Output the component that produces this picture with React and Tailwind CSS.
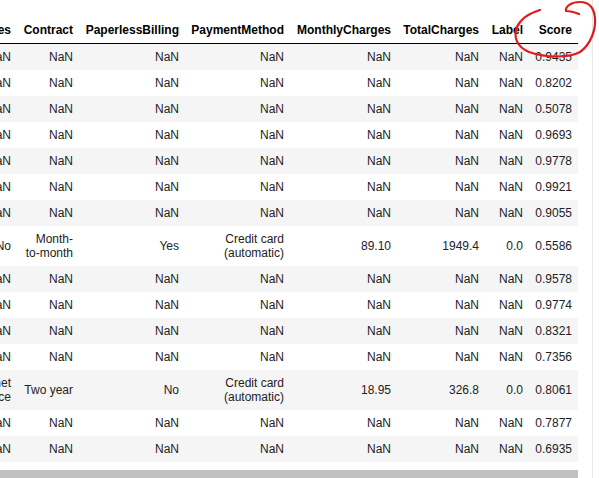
import React from 'react';

const columns = [
    { name: 'StreamingMovies', w: 'w-[112px]' },
    { name: 'Contract', w: 'w-[62px]' },
    { name: 'PaperlessBilling', w: 'w-[106px]' },
    { name: 'PaymentMethod', w: 'w-[105px]' },
    { name: 'MonthlyCharges', w: 'w-[107px]' },
    { name: 'TotalCharges', w: 'w-[88px]' },
    { name: 'Label', w: 'w-[44px]' },
    { name: 'Score', w: 'w-[49px]' },
];

const nanRow = (score) => ['NaN', 'NaN', 'NaN', 'NaN', 'NaN', 'NaN', 'NaN', score];

const rows = [
    nanRow('0.9435'),
    nanRow('0.8202'),
    nanRow('0.5078'),
    nanRow('0.9693'),
    nanRow('0.9778'),
    nanRow('0.9921'),
    nanRow('0.9055'),
    ['No', ['Month-', 'to-month'], 'Yes', ['Credit card', '(automatic)'], '89.10', '1949.4', '0.0', '0.5586'],
    nanRow('0.9578'),
    nanRow('0.9774'),
    nanRow('0.8321'),
    nanRow('0.7356'),
    [['No internet', 'service'], 'Two year', 'No', ['Credit card', '(automatic)'], '18.95', '326.8', '0.0', '0.8061'],
    nanRow('0.7877'),
    nanRow('0.6935'),
];

const Cell = ({ value }) => {
    if (Array.isArray(value)) {
        return (
            <>
                {value[0]}
                <br />
                {value[1]}
            </>
        );
    }
    return value;
};

// hand-drawn marker around the Score header
const ScoreCircle = () => (
    <svg
        className="absolute left-0 top-0 z-10 pointer-events-none"
        width="599"
        height="80"
        viewBox="0 0 599 80"
        fill="none"
        stroke="#e31a1c"
        strokeWidth="2.2"
        strokeLinecap="round"
        strokeLinejoin="round"
    >
        <path d="M579,14 C574,12 569,11 566,11 C565,6 572,2 580,2 C589,2 594,8 595,18 C596,31 590,45 580,52 C569,58 546,58 529,52 C517,47 513,37 517,27 C521,18 530,13 540,10" />
    </svg>
);

export default function App() {
    return (
        <div className="relative w-[599px] h-[478px] bg-white overflow-hidden font-['Liberation_Sans',Arial,sans-serif] text-[12px]">
            <div className="flex h-full">
                <div className="w-[578px] pt-[17px] overflow-hidden">
                    <table className="table-fixed border-collapse -ml-[95px] w-[673px]">
                        <colgroup>
                            {columns.map((c) => (
                                <col key={c.name} className={c.w} />
                            ))}
                        </colgroup>
                        <thead className="border-b border-black">
                            <tr>
                                {columns.map((c) => (
                                    <th key={c.name} className="px-[6px] py-[6px] text-right font-bold leading-[14px] text-black whitespace-nowrap align-bottom">
                                        {c.name}
                                    </th>
                                ))}
                            </tr>
                        </thead>
                        <tbody>
                            {rows.map((r, i) => (
                                <tr key={i} className={i % 2 === 0 ? 'bg-[#f5f5f5]' : 'bg-white'}>
                                    {r.map((v, j) => (
                                        <td key={j} className="px-[6px] py-[6px] text-right leading-[14px] text-[#222] align-middle whitespace-nowrap">
                                            <Cell value={v} />
                                        </td>
                                    ))}
                                </tr>
                            ))}
                        </tbody>
                    </table>
                    <div className="mt-[8px] h-[10px] bg-[#c1c1c1]" />
                </div>
                <div className="ml-[14px] w-px h-full bg-[#e6e6e6]" />
            </div>
            <ScoreCircle />
        </div>
    );
}
